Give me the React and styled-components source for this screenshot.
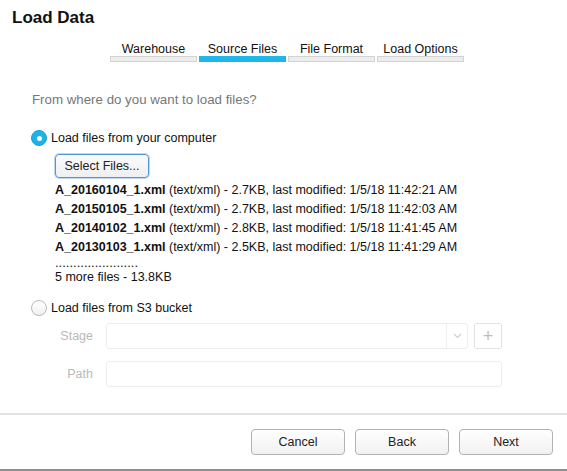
import React from 'react';
import styled, { createGlobalStyle } from 'styled-components';

const GlobalStyle = createGlobalStyle`
  html, body {
    margin: 0;
    padding: 0;
    background: #fff;
  }
  body {
    font-family: "Liberation Sans", Arial, sans-serif;
    color: #111;
  }
`;

const Dialog = styled.div`
  width: 567px;
  height: 471px;
  box-sizing: border-box;
  border-bottom: 2px solid #8e8e8e;
  display: flex;
  flex-direction: column;
`;

const Title = styled.h1`
  margin: 0;
  padding: 8px 12px 0;
  font-size: 17px;
  line-height: 20px;
  font-weight: bold;
  color: #111;
`;

const Steps = styled.div`
  display: flex;
  gap: 2px;
  margin: 14px 0 0 110px;
`;

const Step = styled.div`
  width: 87px;
  display: flex;
  flex-direction: column;
  align-items: center;
  font-size: 12.5px;
  line-height: 14px;
  color: #111;
`;

const StepBar = styled.div`
  align-self: stretch;
  height: 6px;
  box-sizing: border-box;
  background: ${p => (p.$active ? '#1fb6ec' : '#ededed')};
  border: 1px solid ${p => (p.$active ? '#1fb6ec' : '#d3d3d3')};
`;

const Content = styled.div`
  padding-left: 31px;
  display: flex;
  flex-direction: column;
`;

const Question = styled.p`
  margin: 29px 0 0 1px;
  font-size: 13.3px;
  line-height: 18px;
  color: #777;
`;

const RadioRow = styled.label`
  display: flex;
  align-items: center;
  gap: 4px;
  height: 18px;
  margin-top: ${p => p.$top}px;
  font-size: 12.5px;
  color: #111;
`;

const Radio = styled.span`
  width: 16px;
  height: 16px;
  box-sizing: border-box;
  border-radius: 50%;
  display: flex;
  align-items: center;
  justify-content: center;
  border: 1px solid ${p => (p.$checked ? '#129fd4' : '#b9b9b9')};
  background: ${p => (p.$checked ? '#1db3ea' : 'linear-gradient(#ffffff, #f0f0f0)')};

  &::after {
    content: '';
    display: ${p => (p.$checked ? 'block' : 'none')};
    width: 5px;
    height: 5px;
    border-radius: 50%;
    background: #fff;
  }
`;

const Nested = styled.div`
  padding-left: 24px;
  display: flex;
  flex-direction: column;
  align-items: flex-start;
`;

const SelectButton = styled.button`
  margin-top: 7px;
  height: 24px;
  width: 94px;
  padding: 0;
  box-sizing: border-box;
  font-family: inherit;
  font-size: 12.5px;
  color: #222;
  background: linear-gradient(#fbfbfb, #efefef);
  border: 1px solid #4e95dc;
  border-radius: 4px;
  box-shadow: 0 0 0 1px rgba(78, 149, 220, 0.35);
`;

const FileList = styled.div`
  margin-top: ${p => p.$top ?? 3}px;
  font-size: 12.5px;
  line-height: 19px;
  color: #111;
`;

const FileName = styled.b`
  font-weight: bold;
`;

const Dots = styled.div`
  font-size: 13px;
  line-height: 11px;
  color: #111;
`;

const FieldGrid = styled.div`
  margin-top: 6px;
  padding-left: 24px;
  display: grid;
  grid-template-columns: 38px 396px;
  column-gap: 13px;
  row-gap: 12px;
  align-items: center;
`;

const FieldLabel = styled.span`
  text-align: right;
  font-size: 12.5px;
  color: #b9b9b9;
`;

const FieldLine = styled.div`
  display: flex;
  gap: 6px;
  height: 26px;
`;

const SelectBox = styled.div`
  flex: 1;
  display: flex;
  box-sizing: border-box;
  border: 1px solid #ededed;
  border-radius: 3px;
`;

const SelectArrow = styled.span`
  margin-left: auto;
  width: 20px;
  border-left: 1px solid #efefef;
  display: flex;
  align-items: center;
  justify-content: center;
`;

const PlusButton = styled.span`
  width: 28px;
  box-sizing: border-box;
  border: 1px solid #e2e2e2;
  border-radius: 3px;
  display: flex;
  align-items: center;
  justify-content: center;
  color: #bdbdbd;
  font-size: 18px;
  line-height: 1;
`;

const TextBox = styled.div`
  flex: 1;
  box-sizing: border-box;
  border: 1px solid #ededed;
  border-radius: 3px;
`;

const Footer = styled.div`
  margin-top: auto;
  height: 56px;
  box-sizing: border-box;
  border-top: 2px solid #e1e1e1;
  padding: 14px 14px 0 0;
  display: flex;
  justify-content: flex-end;
  gap: 10px;
`;

const FooterButton = styled.button`
  width: 94px;
  height: 26px;
  padding: 0;
  font-family: inherit;
  font-size: 12.5px;
  color: #222;
  background: linear-gradient(#ffffff, #f1f1f1);
  border: 1px solid #b3b3b3;
  border-radius: 4px;
`;

const steps = ['Warehouse', 'Source Files', 'File Format', 'Load Options'];

const files = [
  ['A_20160104_1.xml', '2.7KB', '11:42:21 AM'],
  ['A_20150105_1.xml', '2.7KB', '11:42:03 AM'],
  ['A_20140102_1.xml', '2.8KB', '11:41:45 AM'],
  ['A_20130103_1.xml', '2.5KB', '11:41:29 AM'],
];

export default function App() {
  return (
    <>
      <GlobalStyle />
      <Dialog>
        <Title>Load Data</Title>
        <Steps>
          {steps.map((s, i) => (
            <Step key={s}>
              {s}
              <StepBar $active={i === 1} />
            </Step>
          ))}
        </Steps>

        <Content>
          <Question>From where do you want to load files?</Question>

          <RadioRow $top={20}>
            <Radio $checked />
            Load files from your computer
          </RadioRow>
          <Nested>
            <SelectButton>Select Files...</SelectButton>
            <FileList>
              {files.map(([name, size, time]) => (
                <div key={name}>
                  <FileName>{name}</FileName> (text/xml) - {size}, last modified: 1/5/18 {time}
                </div>
              ))}
            </FileList>
            <Dots>.......................</Dots>
            <FileList $top={0}>5 more files - 13.8KB</FileList>
          </Nested>

          <RadioRow $top={12}>
            <Radio />
            Load files from S3 bucket
          </RadioRow>
          <FieldGrid>
            <FieldLabel>Stage</FieldLabel>
            <FieldLine>
              <SelectBox>
                <SelectArrow>
                  <svg width="9" height="6" viewBox="0 0 9 6">
                    <path d="M1 1l3.5 3.5L8 1" fill="none" stroke="#cfcfcf" strokeWidth="1.2" />
                  </svg>
                </SelectArrow>
              </SelectBox>
              <PlusButton>+</PlusButton>
            </FieldLine>
            <FieldLabel>Path</FieldLabel>
            <FieldLine>
              <TextBox />
            </FieldLine>
          </FieldGrid>
        </Content>

        <Footer>
          <FooterButton>Cancel</FooterButton>
          <FooterButton>Back</FooterButton>
          <FooterButton>Next</FooterButton>
        </Footer>
      </Dialog>
    </>
  );
}
